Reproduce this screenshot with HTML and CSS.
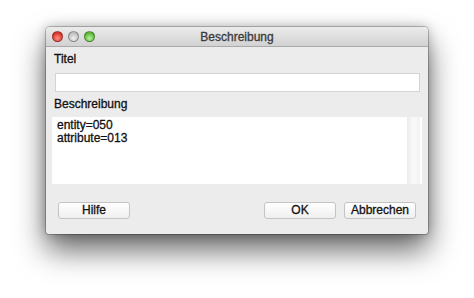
FILE: index.html
```html
<!DOCTYPE html>
<html lang="de">
<head>
    <meta charset="UTF-8">
    <title>Beschreibung</title>
    <link rel="stylesheet" href="styles.css">
</head>
<body>
    <div class="desk">
        <div class="window">
            <div class="titlebar">
                <div class="lights">
                    <span class="light red"></span>
                    <span class="light grey"></span>
                    <span class="light green"></span>
                </div>
                <div class="title">Beschreibung</div>
            </div>
            <div class="content">
                <label class="label">Titel</label>
                <input type="text" class="field">
                <label class="label">Beschreibung</label>
                <div class="textarea">
                    <div class="text">entity=050<br>attribute=013</div>
                    <div class="scrollbar"></div>
                </div>
                <div class="buttons">
                    <button class="btn">Hilfe</button>
                    <div class="spacer"></div>
                    <button class="btn">OK</button>
                    <button class="btn">Abbrechen</button>
                </div>
            </div>
        </div>
    </div>
</body>
</html>
```

FILE: styles.css
```css
body {
    margin: 0;
    background: #ffffff;
    font-family: "Liberation Sans", Arial, sans-serif;
    font-size: 12px;
    color: #111;
    -webkit-text-stroke: 0.3px;
}
.desk {
    height: 298px;
    padding: 27px 0 0 46px;
    box-sizing: border-box;
}
.window {
    width: 382px;
    height: 207px;
    background: #ececec;
    border-radius: 4px 4px 3px 3px;
    box-shadow: 0 0 0 1px rgba(0,0,0,0.22), 0 0 12px rgba(0,0,0,0.25), 0 16px 30px rgba(0,0,0,0.6);
    display: flex;
    flex-direction: column;
    overflow: hidden;
}
.titlebar {
    height: 19px;
    background: linear-gradient(#ebebeb, #d2d2d2);
    border-bottom: 1px solid #a9a9a9;
    display: flex;
    align-items: center;
    position: relative;
}
.lights {
    display: flex;
    gap: 5px;
    padding-left: 6px;
}
.light {
    width: 11px;
    height: 11px;
    border-radius: 50%;
    box-sizing: border-box;
    border: 1px solid rgba(0,0,0,0.3);
}
.red {
    background: radial-gradient(circle at 50% 70%, #ff8f85, #d8332a 70%);
}
.grey {
    background: radial-gradient(circle at 50% 70%, #f0f0f0, #bdbdbd 70%);
}
.green {
    background: radial-gradient(circle at 50% 70%, #b8f59a, #5bb53a 70%);
}
.title {
    position: absolute;
    left: 0;
    right: 0;
    text-align: center;
    color: #3a3a3a;
    font-size: 12px;
    pointer-events: none;
}
.content {
    flex: 1;
    display: flex;
    flex-direction: column;
    padding: 5px 8px 0 8px;
}
.label {
    font-size: 12px;
    line-height: 15px;
}
.field {
    margin: 6px 0 5px 1px;
    width: 365px;
    height: 19px;
    box-sizing: border-box;
    border: 1px solid #d4d4d4;
    background: #fff;
    padding: 0;
}
.textarea {
    margin: 5px 0 0 -2px;
    width: 370px;
    height: 67px;
    background: #fff;
    display: flex;
}
.text {
    flex: 1;
    padding: 2px 0 0 5px;
    line-height: 13px;
    font-size: 12px;
}
.scrollbar {
    width: 13px;
    margin-right: 2px;
    background: linear-gradient(to right, #ececec, #fafafa 50%, #f2f2f2);
}
.buttons {
    display: flex;
    margin-top: 18px;
    padding: 0 4px 0 4px;
}
.btn {
    width: 72px;
    height: 17px;
    padding: 0;
    border: 1px solid #c4c4c4;
    border-radius: 3px;
    background: linear-gradient(#ffffff, #efefef);
    font-family: "Liberation Sans", Arial, sans-serif;
    font-size: 12px;
    line-height: 15px;
    color: #111;
    -webkit-text-stroke: 0.3px;
    margin-right: 8px;
}
.btn:last-child {
    margin-right: 0;
}
.spacer {
    flex: 1;
}
```
